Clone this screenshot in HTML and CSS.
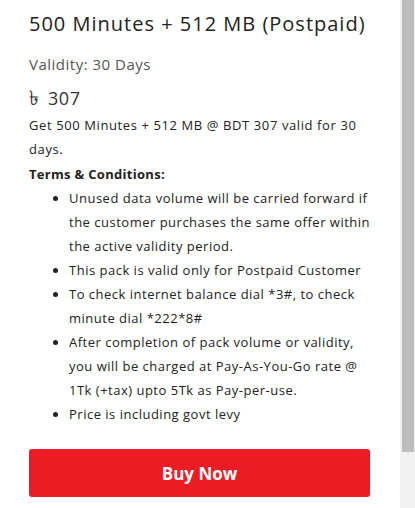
FILE: index.html
```html
<!DOCTYPE html>
<html>
<head>
<meta charset="utf-8">
<link rel="stylesheet" href="styles.css">
</head>
<body>
<div class="page">
  <main class="content">
    <h1 class="title">500 Minutes + 512 MB (Postpaid)</h1>
    <p class="validity">Validity: 30 Days</p>
    <p class="price"><span class="taka">৳</span> 307</p>
    <p class="desc">Get 500 Minutes + 512 MB @ BDT 307 valid for 30 days.</p>
    <p class="terms-head">Terms &amp; Conditions:</p>
    <ul class="terms">
      <li>Unused data volume will be carried forward if the customer purchases the same offer within the active validity period.</li>
      <li>This pack is valid only for Postpaid Customer</li>
      <li>To check internet balance dial *3#, to check minute dial *222*8#</li>
      <li>After completion of pack volume or validity, you will be charged at Pay-As-You-Go rate @ 1Tk (+tax) upto 5Tk as Pay-per-use.</li>
      <li>Price is including govt levy</li>
    </ul>
    <button class="buy">Buy Now</button>
  </main>
  <div class="scrollbar"><div class="thumb"></div></div>
</div>
</body>
</html>
```
FILE: styles.css
```css
html, body { margin: 0; padding: 0; background: #fff; }
body { font-family: "Open Sans", "Noto Sans", sans-serif; color: #222; }
.page { display: flex; height: 508px; overflow: hidden; }
.content { flex: 1; padding: 10px 30px 0 29px; }
.scrollbar { width: 15px; background: #f1f1f1; display: flex; flex-direction: column; }
.thumb { height: 452px; margin: 0 1px 0 2px; background: #bdbdbd; }
.title { margin: 0; font-size: 20px; font-weight: 400; line-height: 28px; color: #222; letter-spacing: 1px; }
.validity { margin: 16px 0 0; font-size: 15px; line-height: 20px; color: #555; letter-spacing: 0.5px; }
.price { margin: 12px 0 0; font-size: 18px; line-height: 24px; color: #333; letter-spacing: 0.6px; }
.taka { display: inline-block; font-size: 20px; margin-right: 3px; }
.desc { margin: 3px 0 0; font-size: 13px; line-height: 24px; color: #222; letter-spacing: 0.6px; }
.terms-head { margin: 1px 0 0; font-size: 13px; line-height: 24px; font-weight: 700; letter-spacing: 0.3px; }
.terms { margin: 0 -6px 0 0; padding-left: 40px; font-size: 13px; line-height: 24px; letter-spacing: 0.5px; }
.buy { display: block; width: 100%; margin-top: 23px; height: 48px; border: 0; border-radius: 3px; background: #ed1c24; color: #fff; font-family: inherit; font-size: 17px; font-weight: 700; }
```
